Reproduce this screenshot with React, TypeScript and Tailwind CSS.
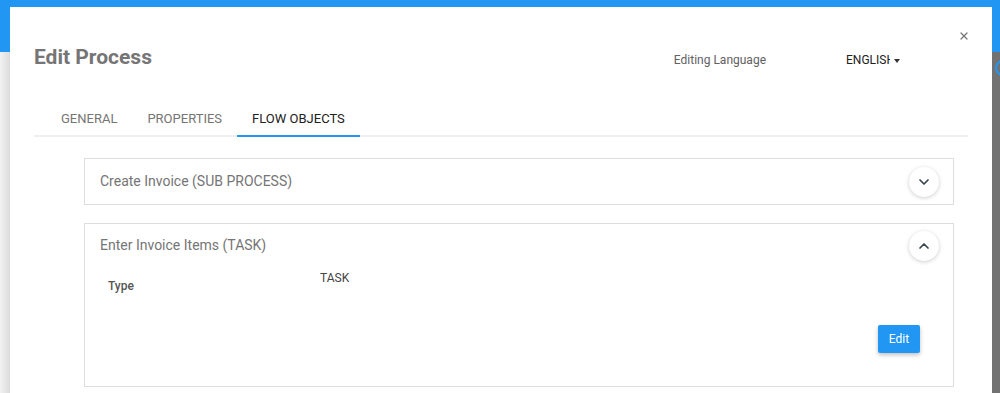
import { ChevronDown, ChevronUp, X } from "lucide-react";

const tabs = ["GENERAL", "PROPERTIES", "FLOW OBJECTS"];

function RoundToggle({ open }: { open: boolean }) {
  const Icon = open ? ChevronUp : ChevronDown;
  return (
    <button className="flex size-[30px] items-center justify-center rounded-full bg-white shadow-[0_1px_4px_rgba(0,0,0,0.2)]">
      <Icon className="size-4 text-[#37474f]" strokeWidth={2.6} />
    </button>
  );
}

export default function App() {
  return (
    <div className="relative h-[393px] w-[1000px] overflow-hidden bg-[#e9e9e9] font-['Roboto',sans-serif]">
      {/* page behind the dialog */}
      <div className="absolute inset-x-0 top-0 h-[52px] bg-[#2196f3]" />
      <div className="absolute right-0 top-[52px] bottom-0 w-[9px] bg-[#727272]">
        <div className="mt-2 ml-1 size-4 rounded-full border-2 border-[#2196f3]" />
      </div>
      <div className="absolute left-0 top-[52px] bottom-0 w-[10px] bg-gradient-to-r from-[#f2f2f2] to-[#dcdcdc]" />

      {/* dialog */}
      <div className="absolute left-[10px] top-[7px] h-[400px] w-[982px] bg-white">
        <div className="flex items-start pl-[24px] pr-[22px] pt-[27px]">
          <h1 className="mt-[8px] text-[21px] font-bold text-[#757575]">Edit Process</h1>
          <div className="ml-auto mt-[17px] flex items-center">
            <span className="text-[12px] text-[#616161]">Editing Language</span>
            <div className="ml-[80px] flex items-center">
              <span className="w-[44px] overflow-hidden whitespace-nowrap text-[12px] text-[#212121]">ENGLISH</span>
              <span className="ml-[4px] mt-[1px] border-x-[3.5px] border-t-[4px] border-x-transparent border-t-[#333]" />
            </div>
          </div>
          <X className="ml-[58px] -mt-[4px] size-[12px] text-[#777]" strokeWidth={2.4} />
        </div>

        <div className="mx-[24px] mt-[35px] flex border-b-2 border-[#eeeeee] pl-[12px]">
          {tabs.map((t, i) => (
            <div
              key={t}
              className={`-mb-[2px] border-b-2 px-[15px] pb-[7px] text-[13px] ${
                i === 2 ? "border-[#2196f3] text-[#212121]" : "border-transparent text-[#757575]"
              }`}
            >
              {t}
            </div>
          ))}
        </div>

        <div className="ml-[74px] mr-[38px] mt-[21px] flex flex-col gap-[18px]">
          <div className="flex h-[47px] items-center border border-[#dddddd] pl-[15px] pr-[14px]">
            <span className="text-[14px] text-[#757575]">Create Invoice (SUB PROCESS)</span>
            <div className="ml-auto">
              <RoundToggle open={false} />
            </div>
          </div>

          <div className="flex h-[164px] flex-col border border-[#dddddd] pl-[15px] pr-[14px]">
            <div className="flex h-[42px] items-center pt-[1px]">
              <span className="text-[14px] text-[#757575]">Enter Invoice Items (TASK)</span>
              <div className="ml-auto">
                <RoundToggle open />
              </div>
            </div>
            <div className="flex pl-[8px]">
              <span className="mt-[11px] w-[212px] text-[12px] font-medium text-[#555]">Type</span>
              <span className="mt-[3px] text-[12px] text-[#444]">TASK</span>
            </div>
            <div className="mt-[30px] flex justify-end pr-[19px]">
              <button className="h-[28px] w-[42px] rounded-[2px] bg-[#2196f3] text-[12px] text-white shadow-[0_2px_4px_rgba(0,0,0,0.25)]">
                Edit
              </button>
            </div>
          </div>
        </div>
      </div>
    </div>
  );
}
